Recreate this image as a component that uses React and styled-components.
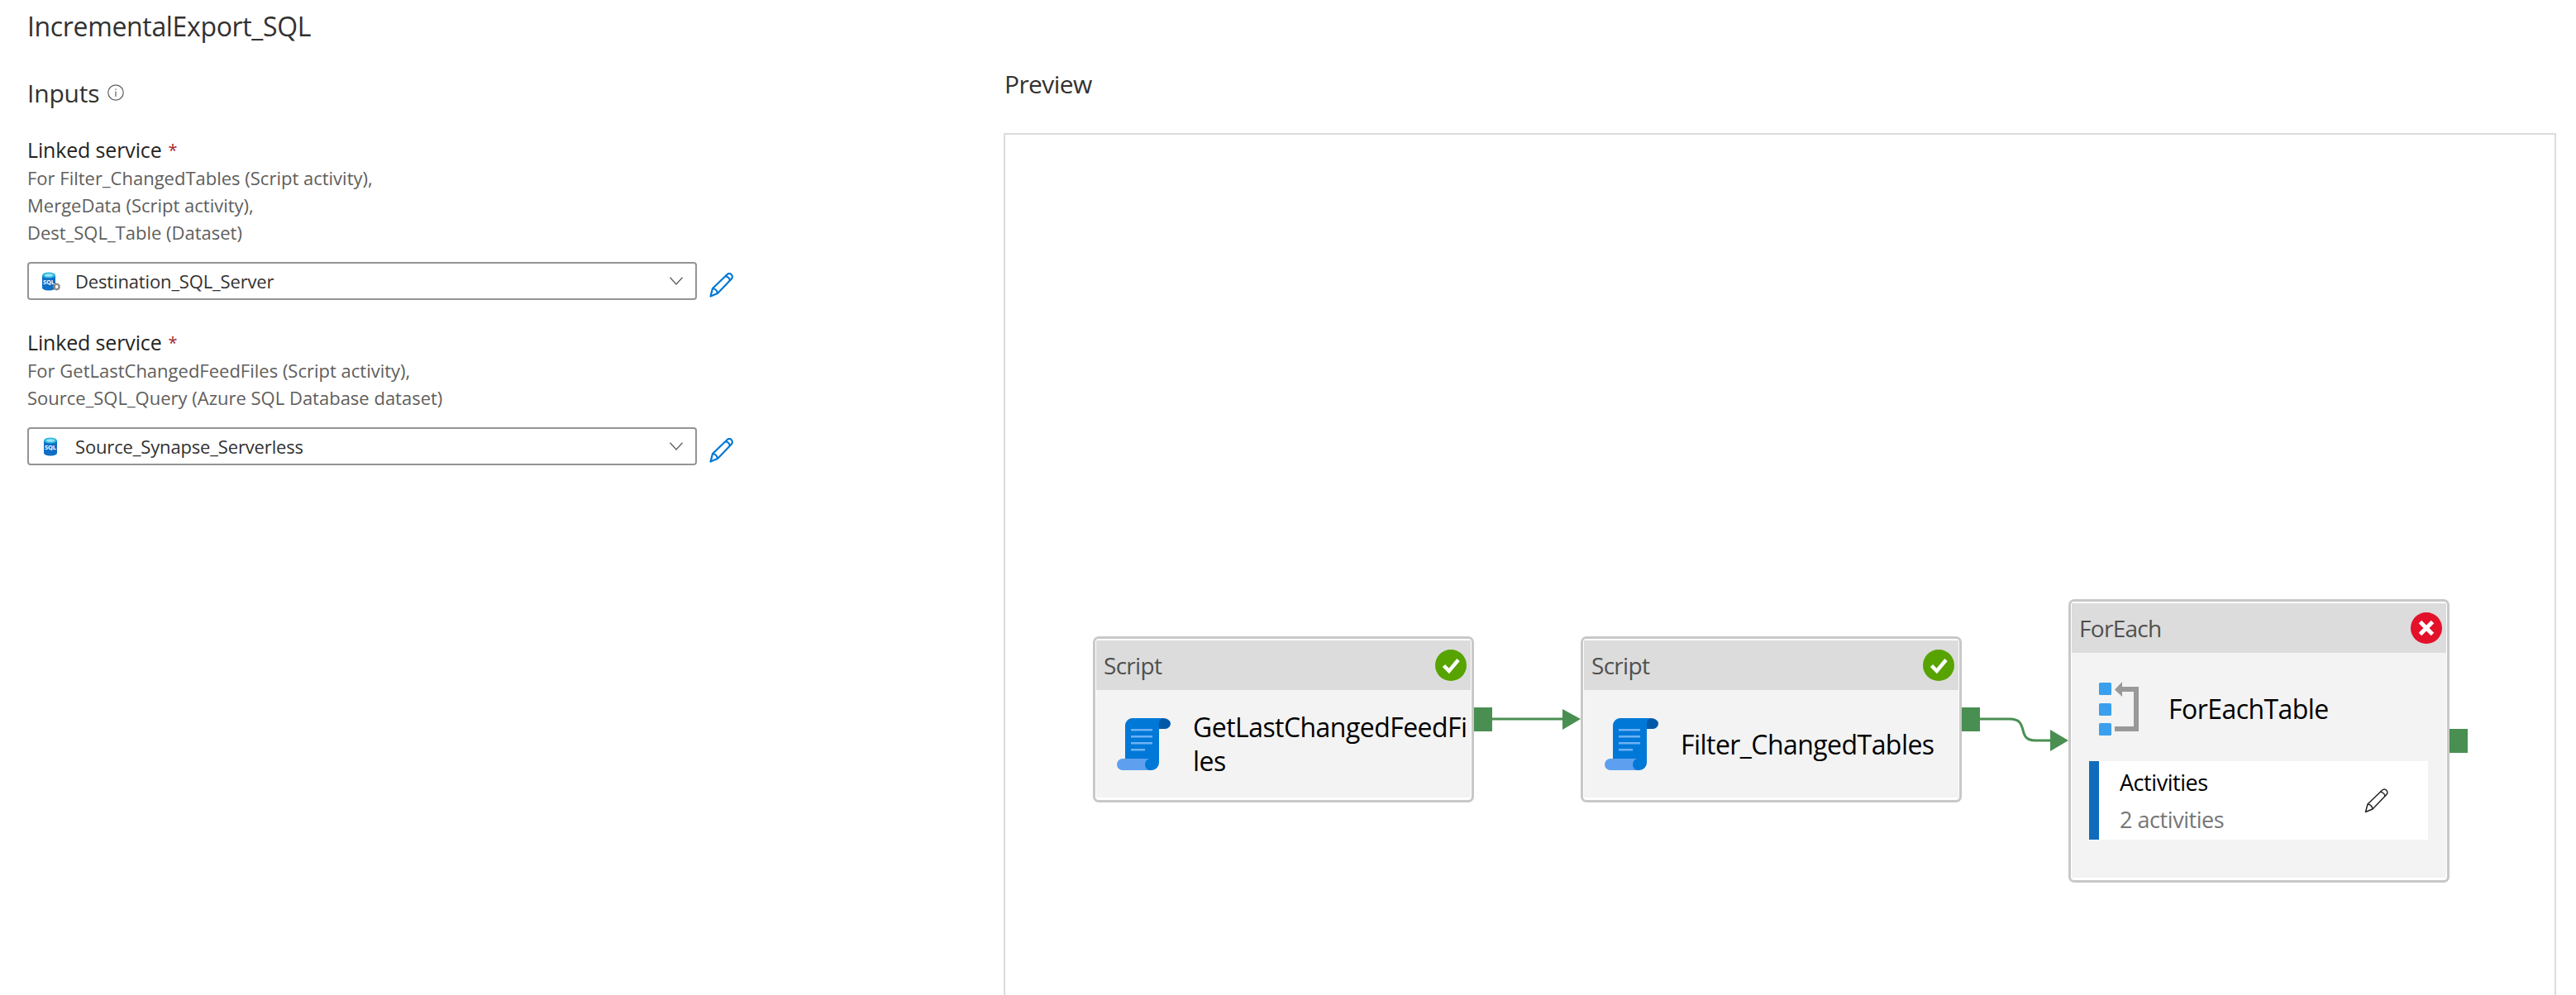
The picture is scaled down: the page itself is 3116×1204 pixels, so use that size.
import styled, { createGlobalStyle } from 'styled-components';

const GlobalStyle = createGlobalStyle`
  html, body {
    margin: 0;
    height: 1204px;
    overflow: hidden;
    background: #fff;
    font-family: "Open Sans", "Noto Sans", sans-serif;
  }
`;

const Page = styled.div`
  display: grid;
  grid-template-columns: 1214px 1878px;
  height: 1204px;
  overflow: hidden;
`;

const LeftPanel = styled.div`
  padding: 12px 0 0 33px;
`;

const Title = styled.div`
  font-size: 32px;
  line-height: 40px;
  letter-spacing: -0.35px;
  color: #323130;
`;

const InputsHeading = styled.div`
  display: flex;
  align-items: flex-start;
  gap: 10px;
  margin-top: 41px;
  font-size: 30px;
  line-height: 40px;
  letter-spacing: -0.2px;
  color: #323130;

  svg {
    margin-top: 9px;
  }
`;

const Field = styled.div`
  margin-top: ${({ $gap }) => $gap};
`;

const Label = styled.div`
  font-size: 25px;
  line-height: 34px;
  letter-spacing: -0.15px;
  color: #252423;
`;

const Required = styled.span`
  color: #a4262c;
  margin-left: 8px;
  font-size: 20px;
  line-height: 0;
  vertical-align: 2px;
`;

const Description = styled.div`
  margin-top: 1px;
  font-size: 22px;
  line-height: 33px;
  color: #605e5c;
`;

const SelectRow = styled.div`
  display: flex;
  align-items: center;
  gap: 15px;
  margin-top: 19px;

  > svg {
    margin-top: 10px;
  }
`;

const Select = styled.div`
  box-sizing: border-box;
  width: 810px;
  height: 46px;
  display: flex;
  align-items: center;
  padding: 0 15px 0 ${({ $pad }) => $pad};
  border: 2px solid #969492;
  border-radius: 4px;
  font-size: 22px;
  letter-spacing: -0.15px;
  color: #323130;
`;

const SelectValue = styled.span`
  flex: 1;
  margin-left: ${({ $gap }) => $gap};
`;

const RightPanel = styled.div`
  display: flex;
  flex-direction: column;
`;

const PreviewTitle = styled.div`
  margin: 82px 0 0 1px;
  font-size: 30px;
  line-height: 40px;
  letter-spacing: -0.6px;
  color: #323130;
`;

const Canvas = styled.div`
  position: relative;
  flex: 1;
  margin-top: 39px;
  border: 2px solid #dcdcdc;
  border-bottom: none;
`;

const EdgeLayer = styled.svg`
  position: absolute;
  left: 0;
  top: 0;
  width: 100%;
  height: 100%;
`;

const Node = styled.div`
  position: absolute;
  left: ${({ $x }) => $x}px;
  top: ${({ $y }) => $y}px;
  box-sizing: border-box;
  width: 461px;
  height: ${({ $h }) => $h}px;
  display: flex;
  flex-direction: column;
  padding: 2px 1px 3px;
  background: #fff;
  border: 3px solid #c8c8c8;
  border-radius: 7px;
`;

const NodeHeader = styled.div`
  display: flex;
  align-items: center;
  justify-content: space-between;
  height: 60px;
  flex-shrink: 0;
  padding: 0 5px 0 9px;
  background: #dcdcdc;
  font-size: 28px;
  letter-spacing: -0.7px;
  color: #505050;
`;

const NodeBody = styled.div`
  flex: 1;
  background: #f3f3f3;
`;

const NameRow = styled.div`
  display: flex;
  align-items: center;
  height: 100%;
  gap: 27px;
  padding-left: 23px;
`;

const NodeName = styled.div`
  flex: 1;
  min-width: 0;
  padding-right: 3px;
  font-size: 32px;
  line-height: 41px;
  letter-spacing: -0.55px;
  color: #000;
  word-break: break-all;
`;

const LoopRow = styled.div`
  display: flex;
  align-items: center;
  gap: 36px;
  padding: 35px 0 0 33px;
`;

const ActivityPanel = styled.div`
  display: flex;
  align-items: center;
  justify-content: space-between;
  box-sizing: border-box;
  height: 95px;
  margin: 31px 22px 0 21px;
  padding: 0 47px 0 25px;
  background: #fff;
  border-left: 12px solid #0f6cbd;
`;

const ActivityTitle = styled.div`
  font-size: 27px;
  line-height: 45px;
  letter-spacing: -0.45px;
  color: #000;
`;

const ActivityCount = styled(ActivityTitle)`
  color: #767676;
`;

const Port = styled.div`
  position: absolute;
  left: calc(100% + 3px);
  top: ${({ $top }) => $top}px;
  width: 22px;
  height: 29px;
  background: #4a8f52;
`;

const InfoIcon = () => (
  <svg width="20" height="20" viewBox="0 0 20 20" fill="none">
    <circle cx="10" cy="10" r="9.2" stroke="#605e5c" strokeWidth="1.2" />
    <rect x="9.4" y="8.5" width="1.2" height="6.5" fill="#605e5c" />
    <rect x="9.4" y="5.4" width="1.2" height="1.5" fill="#605e5c" />
  </svg>
);

const SqlIcon = ({ gear }) => (
  <svg width={gear ? 22 : 17} height="23" viewBox={gear ? '0 0 22 23' : '0 0 17 23'} style={{ flexShrink: 0 }}>
    <path d="M0 4v15c0 2 3.400 3.500 8 3.500s8-1.500 8-3.500V4z" fill="#0f6fc6" />
    <ellipse cx="8" cy="4" rx="8" ry="3.500" fill="#2fb8e0" />
    <ellipse cx="8" cy="4" rx="5" ry="1.800" fill="#9fe3f5" />
    <text x="8" y="15" textAnchor="middle" fontSize="7.500" fontWeight="700" fill="#fff" fontFamily="Open Sans">SQL</text>
    {gear && (
      <g>
        <circle cx="17.500" cy="18" r="3" fill="none" stroke="#8a8a8a" strokeWidth="2" />
        <circle cx="17.500" cy="18" r="4.300" fill="none" stroke="#8a8a8a" strokeWidth="1" strokeDasharray="1.500 1.500" />
      </g>
    )}
  </svg>
);

const Chevron = () => (
  <svg width="16" height="10" viewBox="0 0 16 10" fill="none">
    <path d="M.5.7 8 9 15.500.7" stroke="#605e5c" strokeWidth="1.300" />
  </svg>
);

const Pencil = ({ color, width }) => (
  <svg width="30" height="30" viewBox="0 0 30 30" fill="none" stroke={color} strokeWidth={width} strokeLinejoin="round" style={{ flexShrink: 0 }}>
    <path d="M1.500 28.500 4 19 21.500 2.200c1.600-1.500 3.800-1.400 5.200 0s1.600 3.700.1 5.200L10 25z" />
    <path d="M4 19c3 .4 5.500 2.800 6 6M19.500 4.200c2.800.4 5.200 2.800 5.500 5.300" />
  </svg>
);

const StatusOk = () => (
  <svg width="38" height="38" viewBox="0 0 38 38">
    <circle cx="19" cy="19" r="19" fill="#57a300" />
    <path d="M10.500 19.500 16.800 26 28 12.500" fill="none" stroke="#fff" strokeWidth="4.500" />
  </svg>
);

const StatusError = () => (
  <svg width="38" height="38" viewBox="0 0 38 38">
    <circle cx="19" cy="19" r="19" fill="#e3112a" />
    <path d="M11.500 11.500 26.500 26.500M26.500 11.500 11.500 26.500" fill="none" stroke="#fff" strokeWidth="5" />
  </svg>
);

const ScriptIcon = () => (
  <svg width="67" height="63" viewBox="0 0 67 63" style={{ flexShrink: 0 }}>
    <path d="M53 0h4a9.500 6.500 0 0 1 10 6.500 6.500 6.500 0 0 1-6.500 6.500H53z" fill="#0058a8" />
    <path d="M20 0h39c-4 0-6 3-6 6.500V54a9 9 0 0 1-9 9H12V9a9 9 0 0 1 8-9z" fill="#0078d7" />
    <path d="M9 49h33a6 7 0 0 0 0 14H9a7 7 0 0 1 0-14z" fill="#5ea0ef" />
    <g fill="#6db1f5">
      <rect x="19" y="13" width="26" height="2.500" />
      <rect x="19" y="21" width="26" height="2.500" />
      <rect x="19" y="29" width="26" height="2.500" />
      <rect x="19" y="37" width="17" height="2.500" />
    </g>
  </svg>
);

const ForEachIcon = () => (
  <svg width="48" height="65" viewBox="0 0 48 65" style={{ flexShrink: 0 }}>
    <g fill="#3a9fec">
      <rect x="0" y="1" width="15" height="15" rx="1.500" />
      <rect x="0" y="26" width="15" height="15" rx="1.500" />
      <rect x="0" y="50" width="15" height="15" rx="1.500" />
    </g>
    <path d="M19 9.500 28 0v6h20v54H19v-6h23V12H28v6z" fill="#999" />
  </svg>
);

const scriptNodes = [
  { x: 106, name: 'GetLastChangedFeedFiles', portTop: 83 },
  { x: 696, name: 'Filter_ChangedTables', portTop: 83 },
];

const linkedServices = [
  {
    lines: ['For Filter_ChangedTables (Script activity),', 'MergeData (Script activity),', 'Dest_SQL_Table (Dataset)'],
    value: 'Destination_SQL_Server',
    gear: true,
    gap: '31px',
  },
  {
    lines: ['For GetLastChangedFeedFiles (Script activity),', 'Source_SQL_Query (Azure SQL Database dataset)'],
    value: 'Source_Synapse_Serverless',
    gear: false,
    gap: '34px',
  },
];

const App = () => {
  return (
    <Page>
      <GlobalStyle />
      <LeftPanel>
        <Title>IncrementalExport_SQL</Title>
        <InputsHeading>
          Inputs
          <InfoIcon />
        </InputsHeading>
        {linkedServices.map((service) => (
          <Field key={service.value} $gap={service.gap}>
            <Label>
              Linked service<Required>*</Required>
            </Label>
            <Description>
              {service.lines.map((line) => (
                <div key={line}>{line}</div>
              ))}
            </Description>
            <SelectRow>
              <Select $pad={service.gear ? '16px' : '18px'}>
                <SqlIcon gear={service.gear} />
                <SelectValue $gap={service.gear ? '18px' : '21px'}>{service.value}</SelectValue>
                <Chevron />
              </Select>
              <Pencil color="#0078d4" width="2.200" />
            </SelectRow>
          </Field>
        ))}
      </LeftPanel>
      <RightPanel>
        <PreviewTitle>Preview</PreviewTitle>
        <Canvas>
          <EdgeLayer>
            <g fill="none" stroke="#4a8f52" strokeWidth="3">
              <path d="M588 707H676" />
              <path d="M1179 707H1215C1240 707 1222 733 1246 733H1266" />
            </g>
            <g fill="#4a8f52">
              <path d="M674 695 696 707 674 720z" />
              <path d="M1264 720 1286 733 1264 746z" />
            </g>
          </EdgeLayer>
          {scriptNodes.map((node) => (
            <Node key={node.name} $x={node.x} $y={607} $h={201}>
              <NodeHeader>
                Script
                <StatusOk />
              </NodeHeader>
              <NodeBody>
                <NameRow>
                  <ScriptIcon />
                  <NodeName>{node.name}</NodeName>
                </NameRow>
              </NodeBody>
              <Port $top={node.portTop} />
            </Node>
          ))}
          <Node $x={1286} $y={562} $h={343}>
            <NodeHeader>
              ForEach
              <StatusError />
            </NodeHeader>
            <NodeBody>
              <LoopRow>
                <ForEachIcon />
                <NodeName>ForEachTable</NodeName>
              </LoopRow>
              <ActivityPanel>
                <div>
                  <ActivityTitle>Activities</ActivityTitle>
                  <ActivityCount>2 activities</ActivityCount>
                </div>
                <Pencil color="#222" width="1.500" />
              </ActivityPanel>
            </NodeBody>
            <Port $top={154} />
          </Node>
        </Canvas>
      </RightPanel>
    </Page>
  );
};

export default App;
